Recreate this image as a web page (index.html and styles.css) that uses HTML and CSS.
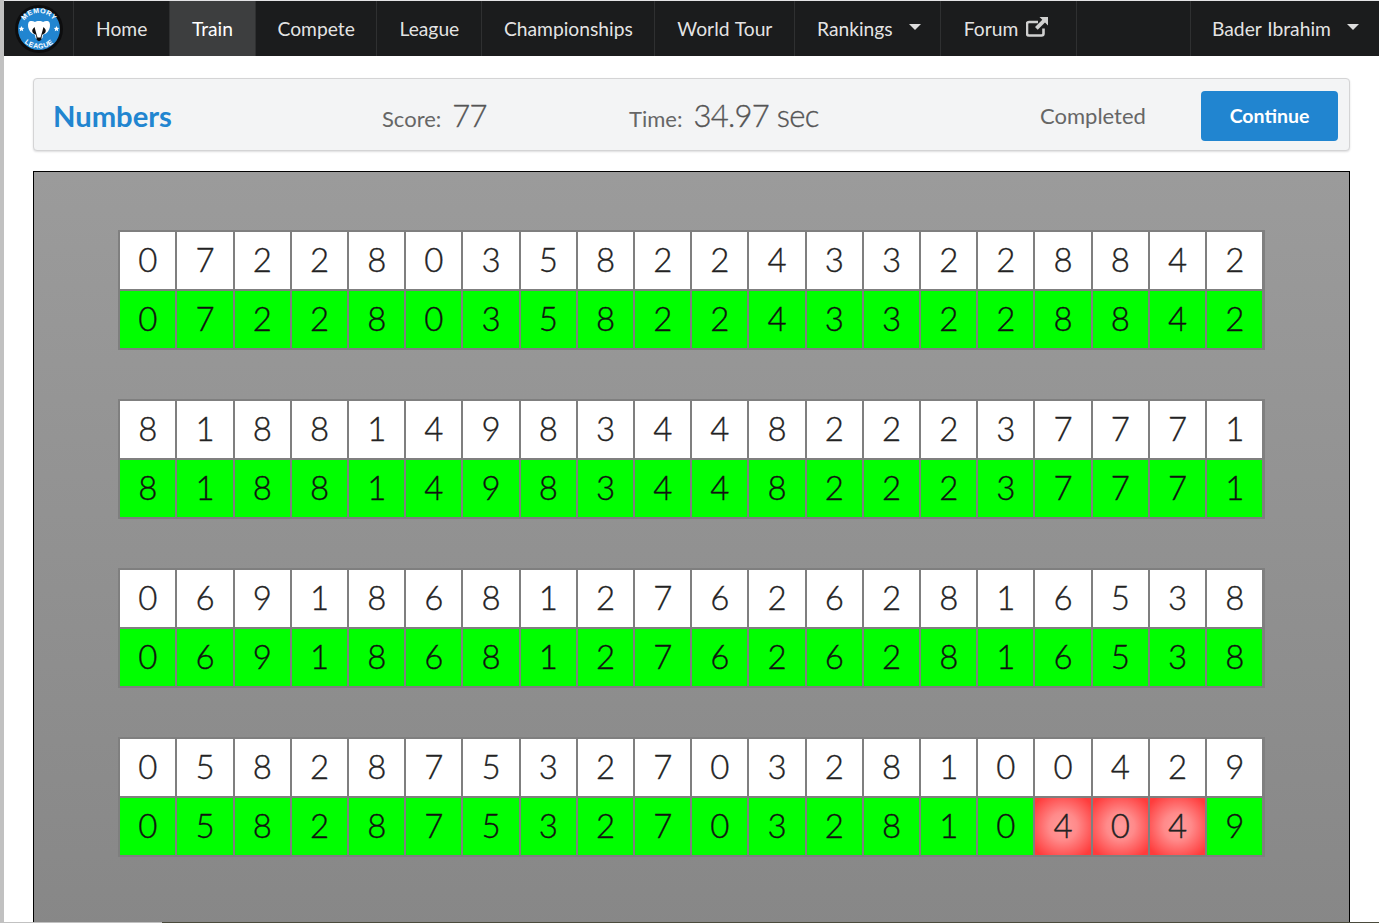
FILE: index.html
```html
<!DOCTYPE html>
<html lang="en">
<head>
<meta charset="utf-8">
<title>Numbers - Memory League</title>
<link rel="stylesheet" href="styles.css">
</head>
<body>
<nav class="menu">
  <a class="item logo" href="#" aria-label="Memory League">
    <svg viewBox="0 0 48 48" width="48" height="48">
      <defs>
        <path id="arcTop" d="M6 26 A18 18 0 0 1 42 26"/>
        <path id="arcBottom" d="M2.500 22 A21.500 21.500 0 0 0 45.500 22"/>
      </defs>
      <circle cx="24" cy="24" r="24" fill="#0d0d0e"/>
      <circle cx="24" cy="24" r="21" fill="#2185d0"/>
      <text class="logo-text"><textPath href="#arcTop" startOffset="50%" text-anchor="middle">MEMORY</textPath></text>
      <text class="logo-text"><textPath href="#arcBottom" startOffset="50%" text-anchor="middle">LEAGUE</textPath></text>
      <path d="M24 16c-2 0-3 .4-4 1-2.500-1.400-5.500-1.200-6.500.5-1 2.200-.5 6.500 1.500 9 1.500 1.800 3.500 3 5 3.200l.5 3.300 3.500 2.500 3.500-2.500.5-3.300c1.500-.2 3.500-1.400 5-3.200 2-2.500 2.500-6.800 1.500-9-1-1.700-4-1.900-6.500-.5-1-.6-2-1-4-1z" fill="#fff"/>
      <path d="M19.500 22c-2 2-3 3.500-1.800 5.600 1.300 1.400 2.300 2 3.300 2.100l.8 5.300 2.200 1.300 2.200-1.300.8-5.300c1-.1 2-.7 3.300-2.100 1.200-2.100.2-3.600-1.800-5.600l-1.500 5.500-1.500 5h-3l-1.500-5z" fill="#0d0d0e"/>
      <path d="M6.500 21l.8 1.800 1.900.2-1.400 1.300.4 1.900-1.700-1-1.700 1 .4-1.900L3.800 23l1.900-.2zM41.500 21l.8 1.800 1.900.2-1.400 1.300.4 1.900-1.700-1-1.700 1 .4-1.900-1.400-1.300 1.900-.2z" fill="#fff"/>
    </svg>
  </a>
  <a class="item" href="#">Home</a>
  <a class="item active" href="#">Train</a>
  <a class="item" href="#">Compete</a>
  <a class="item" href="#">League</a>
  <a class="item" href="#">Championships</a>
  <a class="item" href="#">World Tour</a>
  <a class="item" href="#">Rankings<i class="caret"></i></a>
  <a class="item forum" href="#">Forum
    <svg class="ext" viewBox="0 0 22 20" width="22" height="20">
      <path d="M17.500 11.500V16.500a2 2 0 0 1-2 2H3a2 2 0 0 1-2-2V7a2 2 0 0 1 2-2h9" fill="none" stroke="currentColor" stroke-width="2.600"/>
      <path d="M13.500 0h8.500V8.500l-3-3-7.300 7.300-2.700-2.700 7.300-7.300z" fill="currentColor"/>
    </svg>
  </a>
  <a class="item user" href="#">Bader Ibrahim<i class="caret"></i></a>
</nav>

<main class="page">
  <header class="bar">
    <h1 class="title">Numbers</h1>
    <div class="stat score"><span class="label">Score:</span><span class="value">77</span></div>
    <div class="stat time"><span class="label">Time:</span><span class="value">34.97 sec</span></div>
    <div class="status">Completed</div>
    <button class="continue" type="button">Continue</button>
  </header>

  <section class="board" id="board"></section>
</main>

<div class="edge"></div>
<script src="app.js"></script>
</body>
</html>
```

FILE: styles.css
```css
* { box-sizing: border-box; }
html, body { margin: 0; height: 923px; overflow: hidden; }
body {
  font-family: Lato, "Helvetica Neue", Arial, sans-serif;
  background: #fff;
  color: rgba(0, 0, 0, .87);
  border-left: 4px solid #c1c1c1;
  position: relative;
}
.menu {
  display: flex;
  height: 56px;
  margin-left: -4px;
  background: #1b1c1d;
  border-top: 1px solid #e4e4e6;
  position: relative;
}
.item {
  display: flex;
  align-items: center;
  padding: 0 21.600px 1px 22px;
  color: rgba(255, 255, 255, .9);
  font-size: 19.250px;
  word-spacing: .9px;
  text-decoration: none;
  border-right: 1px solid #2f3031;
  white-space: nowrap;
}
.logo { width: 74px; padding: 0 0 0 15px; }
.logo svg { display: block; }
.logo-text { font: 700 7px "Liberation Sans", Arial, sans-serif; letter-spacing: .5px; fill: #fff; }
.active { background: #3d3e3f; color: #fff; }
.caret {
  display: inline-block;
  width: 0;
  height: 0;
  margin-left: 16.500px;
  margin-right: -3px;
  margin-bottom: 3px;
  border-left: 6px solid transparent;
  border-right: 6px solid transparent;
  border-top: 6px solid rgba(255, 255, 255, .85);
}
.forum { padding-left: 23px; padding-right: 28px; }
.ext { margin-left: 8px; margin-bottom: 3px; color: #d0d0d0; }
.user {
  position: absolute;
  left: 1190px;
  top: 0;
  bottom: 0;
  right: 0;
  border-right: 0;
  border-left: 1px solid #2f3031;
  padding-left: 21px;
}
.page { padding: 22px 29px 0 29px; }
.bar {
  display: flex;
  align-items: center;
  height: 73px;
  padding: 2px 11px 0 19px;
  background: #f3f4f5;
  border: 1px solid #d4d4d5;
  border-radius: 4px;
  box-shadow: 0 1px 2px 0 rgba(34, 36, 38, .15);
}
.title {
  margin: 0;
  width: 329px;
  font-size: 29.200px;
  font-weight: 700;
  color: #2185d0;
  line-height: 1;
}
.stat { display: flex; align-items: baseline; color: #666; }
.label { font-size: 22px; margin-right: 11px; }
.value {
  font-size: 31px;
  font-weight: 300;
  color: #555;
  letter-spacing: -.7px;
  -webkit-text-stroke: .35px #555;
  margin-top: -1px;
}
.score { width: 247px; }
.time { width: 411px; }
.status { width: 161px; font-size: 22px; color: #666; }
.continue {
  width: 137px;
  height: 50px;
  border: 0;
  border-radius: 4px;
  background: #2185d0;
  color: #fff;
  font: 700 19.500px Lato, sans-serif;
}
.board {
  margin-top: 20px;
  height: 760px;
  padding: 58px 0 0 84.300px;
  border: 1px solid #000;
  background: linear-gradient(#9b9b9b, #878787);
}
.group {
  display: grid;
  grid-template-columns: repeat(20, 1fr);
  grid-template-rows: 57px 57px;
  gap: 2px;
  width: 1147px;
  padding: 2px 3px 2px 2px;
  background: #7f7f7f;
  margin-bottom: 49px;
}
.cell {
  display: flex;
  align-items: center;
  justify-content: center;
  padding-bottom: 3px;
  background: #fff;
  font-size: 33px;
  font-weight: 300;
  color: #222;
  -webkit-text-stroke: .35px #222;
}
.ok {
  padding-bottom: 4px;
  background: #0f0;
  color: #111;
  -webkit-text-stroke-color: #111;
}
.bad {
  padding-bottom: 4px;
  background: radial-gradient(circle, #ff9c9c 0%, #ff8a8a 35%, #ff3c3c 90%);
  color: #222;
}
.edge {
  position: absolute;
  left: -4px;
  right: 0;
  bottom: 0;
  height: 1px;
  background: linear-gradient(to right, #c1c1c1 162px, #4a4a3c 162px);
}
```

FILE: app.js
```js
var rows = [
  ["07228035822433228842", "07228035822433228842"],
  ["81881498344822237771", "81881498344822237771"],
  ["06918681276262816538", "06918681276262816538"],
  ["05828753270328100429", "05828753270328104049"]
];
var board = document.getElementById("board");
rows.forEach(function (r) {
  var g = document.createElement("div");
  g.className = "group";
  r[0].split("").forEach(function (d) {
    var c = document.createElement("div");
    c.className = "cell";
    c.textContent = d;
    g.appendChild(c);
  });
  r[1].split("").forEach(function (d, i) {
    var c = document.createElement("div");
    c.className = "cell " + (d === r[0][i] ? "ok" : "bad");
    c.textContent = d;
    g.appendChild(c);
  });
  board.appendChild(g);
});
```
